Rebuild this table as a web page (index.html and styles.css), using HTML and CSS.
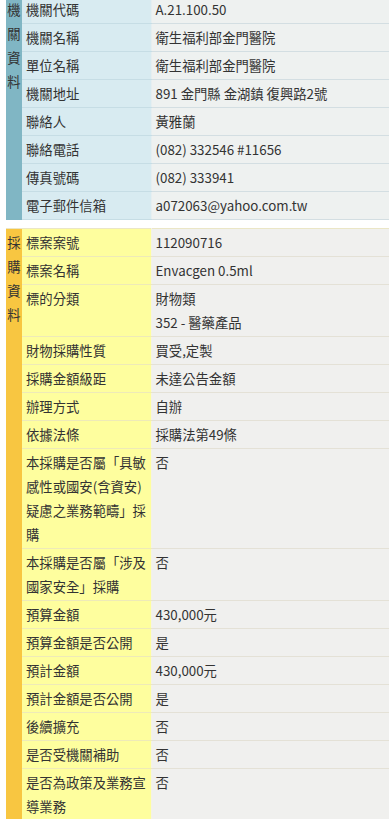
FILE: index.html
```html
<!DOCTYPE html>
<html lang="zh-Hant">
<head>
<meta charset="utf-8">
<title>機關資料</title>
<link rel="stylesheet" href="styles.css">
</head>
<body>
<div class="page">
  <table class="info org">
    <colgroup><col class="c-cat"><col class="c-label"><col class="c-value"></colgroup>
    <tr><td class="cat" rowspan="8">機關資料</td><td class="label">機關代碼</td><td class="value">A.21.100.50</td></tr>
    <tr><td class="label">機關名稱</td><td class="value">衛生福利部金門醫院</td></tr>
    <tr><td class="label">單位名稱</td><td class="value">衛生福利部金門醫院</td></tr>
    <tr><td class="label">機關地址</td><td class="value">891 金門縣 金湖鎮 復興路2號</td></tr>
    <tr><td class="label">聯絡人</td><td class="value">黃雅蘭</td></tr>
    <tr><td class="label">聯絡電話</td><td class="value">(082) 332546 #11656</td></tr>
    <tr><td class="label">傳真號碼</td><td class="value">(082) 333941</td></tr>
    <tr><td class="label">電子郵件信箱</td><td class="value">a072063@yahoo.com.tw</td></tr>
  </table>

  <table class="info buy">
    <colgroup><col class="c-cat"><col class="c-label"><col class="c-value"></colgroup>
    <tr><td class="cat" rowspan="17">採購資料</td><td class="label">標案案號</td><td class="value">112090716</td></tr>
    <tr><td class="label">標案名稱</td><td class="value">Envacgen 0.5ml</td></tr>
    <tr><td class="label">標的分類</td><td class="value">財物類<br>352 - 醫藥產品</td></tr>
    <tr><td class="label">財物採購性質</td><td class="value">買受,定製</td></tr>
    <tr><td class="label">採購金額級距</td><td class="value">未達公告金額</td></tr>
    <tr><td class="label">辦理方式</td><td class="value">自辦</td></tr>
    <tr><td class="label">依據法條</td><td class="value">採購法第49條</td></tr>
    <tr><td class="label">本採購是否屬「具敏感性或國安(含資安)疑慮之業務範疇」採購</td><td class="value">否</td></tr>
    <tr><td class="label">本採購是否屬「涉及國家安全」採購</td><td class="value">否</td></tr>
    <tr><td class="label">預算金額</td><td class="value">430,000元</td></tr>
    <tr><td class="label">預算金額是否公開</td><td class="value">是</td></tr>
    <tr><td class="label">預計金額</td><td class="value">430,000元</td></tr>
    <tr><td class="label">預計金額是否公開</td><td class="value">是</td></tr>
    <tr><td class="label">後續擴充</td><td class="value">否</td></tr>
    <tr><td class="label">是否受機關補助</td><td class="value">否</td></tr>
    <tr><td class="label">是否為政策及業務宣導業務</td><td class="value">否</td></tr>
    <tr><td class="label">&nbsp;</td><td class="value">&nbsp;</td></tr>
  </table>
</div>
</body>
</html>
```

FILE: styles.css
```css
html, body {
  margin: 0;
  padding: 0;
  background: #ffffff;
}

.page {
  padding-left: 6px;
  font-family: "Noto Sans CJK TC", "Noto Sans", sans-serif;
  font-size: 13.33px;
  line-height: 24px;
  color: #333333;
}

.info {
  width: 100%;
  border-collapse: collapse;
  table-layout: fixed;
}

.org {
  margin-top: -4px;
}

.buy {
  margin-top: 8px;
}

.c-cat { width: 16px; }
.c-label { width: 129px; }

.info td {
  padding: 1.5px 4px;
  vertical-align: top;
  text-align: left;
}

.info td.cat {
  padding: 2px 1px;
  text-align: center;
  word-break: break-all;
}

.org .cat { background: #80b6c4; }
.org .label { background: #d8ebf1; border-bottom: 1px solid #c6dde5; }
.org .value { background: #eef1f0; border-bottom: 1px solid #d3dee2; border-left: 1px solid #e6eef0; }

.buy { border-top: 1px solid #ebe6c6; }
.buy .cat { background: #f8c641; }
.buy .label { background: #fefe9e; border-bottom: 1px solid #eeeab8; }
.buy .value { background: #f0f0ee; border-bottom: 1px solid #e4e1d6; border-left: 1px solid #f4f2e4; }
```
